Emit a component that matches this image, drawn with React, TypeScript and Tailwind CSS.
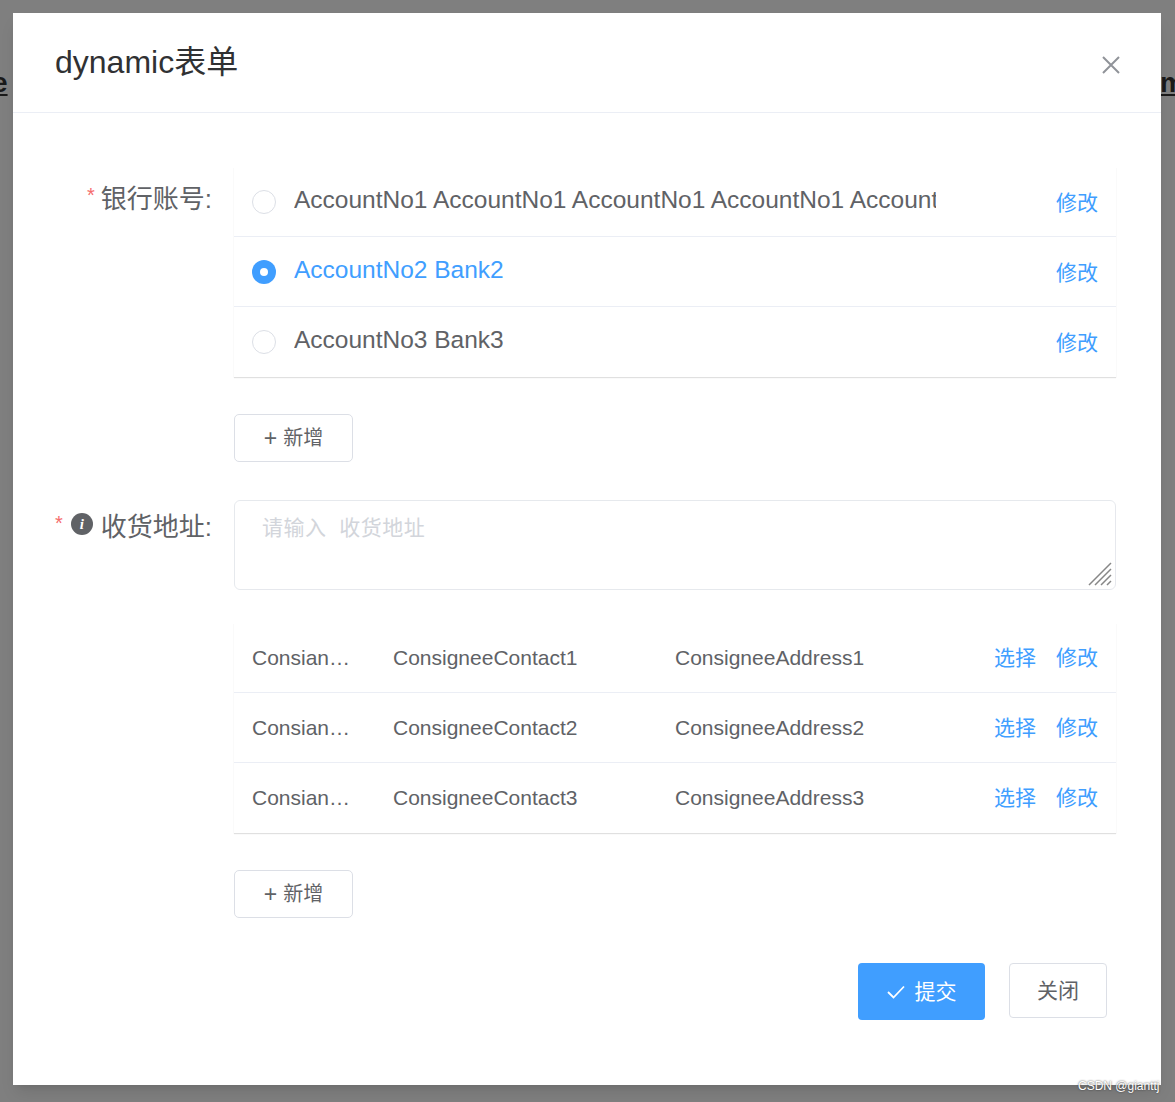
import React from "react";

const font = { fontFamily: '"Liberation Sans", Arial, "Noto Sans CJK SC", sans-serif' };

const accounts = [
  { text: "AccountNo1 AccountNo1 AccountNo1 AccountNo1 AccountNo1 Bank1", checked: false },
  { text: "AccountNo2 Bank2", checked: true },
  { text: "AccountNo3 Bank3", checked: false },
];

const consignees = [1, 2, 3];

const AddButton = () => (
  <button className="h-[48px] w-[119px] border border-[#dcdfe6] rounded-[5px] bg-white text-[20px] text-[#606266] flex items-center justify-center gap-[6px]">
    <span className="text-[23px] leading-none">+</span>
    <span>新增</span>
  </button>
);

export default function App() {
  return (
    <div className="relative w-[1175px] h-[1102px] bg-[#7f7f7f] overflow-hidden" style={font}>
      <span className="absolute left-[-8px] top-[62px] text-[28px] font-bold text-[#1a1a1a] underline">e</span>
      <span className="absolute left-[1160px] top-[62px] text-[28px] font-bold text-[#1a1a1a] underline">m</span>

      <div className="absolute left-[13px] top-[13px] w-[1148px] h-[1072px] bg-white shadow-lg">
        <div className="h-[100px] border-b border-[#ebeef5] flex items-center justify-between pl-[42px] pr-[40px]">
          <span className="text-[32px] text-[#303133] -mt-[2px]">dynamic表单</span>
          <svg width="20" height="20" viewBox="0 0 20 20" className="mt-[4px]">
            <path d="M2 2L18 18M18 2L2 18" stroke="#909399" strokeWidth="2" />
          </svg>
        </div>

        <div className="pt-[54px] pr-[45px]">
          {/* bank account */}
          <div className="flex">
            <div className="w-[221px] shrink-0 text-right pr-[22px] pt-[13px] text-[26px] text-[#606266]">
              <span className="text-[#f56c6c] text-[20px] mr-[6px] align-top">*</span>银行账号:
            </div>
            <div className="flex-1 min-w-0">
              <div className="shadow-[0_1px_1px_rgba(0,0,0,0.12)]">
                {accounts.map((a, i) => (
                  <div
                    key={i}
                    className={`h-[70px] flex items-center pl-[18px] pr-[18px] ${i < 2 ? "border-b border-[#ebeef5]" : ""}`}
                  >
                    {a.checked ? (
                      <span className="w-[24px] h-[24px] rounded-full bg-[#409eff] flex items-center justify-center shrink-0">
                        <span className="w-[8px] h-[8px] rounded-full bg-white" />
                      </span>
                    ) : (
                      <span className="w-[24px] h-[24px] rounded-full border border-[#dcdfe6] bg-white shrink-0" />
                    )}
                    <span
                      className={`ml-[18px] text-[24.5px] -mt-[3px] whitespace-nowrap overflow-hidden w-[642px] ${a.checked ? "text-[#409eff]" : "text-[#606266]"}`}
                    >
                      {a.text}
                    </span>
                    <span className="ml-auto text-[21px] text-[#409eff] pt-[2px]">修改</span>
                  </div>
                ))}
              </div>
              <div className="mt-[37px]">
                <AddButton />
              </div>
            </div>
          </div>

          {/* address */}
          <div className="flex mt-[38px]">
            <div className="w-[221px] shrink-0 text-right pr-[22px] pt-[8px] text-[26px] text-[#606266] flex justify-end items-start">
              <span className="text-[#f56c6c] text-[20px] mr-[8px]">*</span>
              <span className="w-[22px] h-[22px] mt-[5px] mr-[8px] rounded-full bg-[#606266] text-white text-[15px] font-bold italic flex items-center justify-center" style={{ fontFamily: '"Liberation Serif", serif' }}>i</span>
              收货地址:
            </div>
            <div className="flex-1 min-w-0">
              <div className="relative h-[90px] border border-[#dcdfe6] rounded-[6px] px-[27px] pt-[11px] text-[21px] tracking-[0.5px] text-[#c0c4cc] opacity-70 whitespace-pre">
                {"请输入  收货地址"}
                <svg width="26" height="26" viewBox="0 0 26 26" className="absolute right-[2px] bottom-[2px]">
                  <path d="M24 2L2 24M24 8L8 24M24 14L14 24M24 20L20 24" stroke="#555" strokeWidth="1.5" />
                </svg>
              </div>
              <div className="mt-[33px] shadow-[0_1px_1px_rgba(0,0,0,0.12)]">
                {consignees.map((n, i) => (
                  <div
                    key={n}
                    className={`h-[70px] flex items-center pl-[18px] pr-[18px] text-[21px] text-[#606266] ${i < 2 ? "border-b border-[#ebeef5]" : ""}`}
                  >
                    <span className="w-[141px] shrink-0">Consian…</span>
                    <span className="w-[282px] shrink-0">ConsigneeContact{n}</span>
                    <span>ConsigneeAddress{n}</span>
                    <span className="ml-auto text-[21px] text-[#409eff]">选择</span>
                    <span className="ml-[20px] text-[21px] text-[#409eff]">修改</span>
                  </div>
                ))}
              </div>
              <div className="mt-[37px]">
                <AddButton />
              </div>
            </div>
          </div>

          <div className="flex justify-end mt-[45px] pr-[9px] gap-[24px]">
            <button className="w-[127px] h-[57px] rounded-[4px] bg-[#409eff] text-white text-[21px] flex items-center justify-center gap-[10px]">
              <svg width="18" height="14" viewBox="0 0 18 14">
                <path d="M1 7L6.5 12.5L17 1.5" stroke="white" strokeWidth="1.8" fill="none" />
              </svg>
              提交
            </button>
            <button className="w-[98px] h-[55px] rounded-[4px] border border-[#dcdfe6] bg-white text-[21px] text-[#606266]">
              关闭
            </button>
          </div>
        </div>
      </div>

      <span className="absolute left-[1078px] top-[1077px] text-[12px] text-white" style={{ textShadow: "0 0 2px #333" }}>
        CSDN @gianttj
      </span>
    </div>
  );
}
